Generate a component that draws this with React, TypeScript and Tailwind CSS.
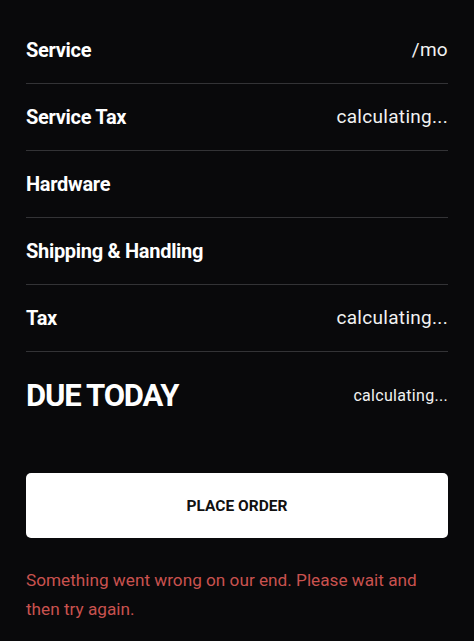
import * as React from "react"

const rows = [
  { label: "Service", value: "/mo" },
  { label: "Service Tax", value: "calculating..." },
  { label: "Hardware", value: "" },
  { label: "Shipping & Handling", value: "" },
  { label: "Tax", value: "calculating..." },
]

export default function App() {
  return (
    <div
      className="min-h-screen w-full bg-[#09090b] px-[26px] pt-[17px] text-white"
      style={{ fontFamily: "Roboto, 'Liberation Sans', sans-serif" }}
    >
      {rows.map((row) => (
        <div
          key={row.label}
          className="flex h-[67px] items-center justify-between border-b border-[#333336]"
        >
          <span className="text-[20px] font-bold tracking-[-0.3px]">{row.label}</span>
          <span className="text-[19px] font-normal tracking-[0.3px] text-[#f2f2f2]">{row.value}</span>
        </div>
      ))}

      {/* Due today */}
      <div className="flex h-[88px] items-center justify-between">
        <span className="text-[31px] font-bold tracking-[-1.2px]">DUE TODAY</span>
        <span className="text-[16px] font-normal tracking-[0.3px] text-[#f2f2f2]">calculating...</span>
      </div>

      <button className="mt-[33px] flex h-[65px] w-full items-center justify-center rounded-[5px] bg-white pt-[2px] text-[15.5px] font-bold text-[#111]">
        PLACE ORDER
      </button>

      <p className="mt-[28px] text-[17.2px] leading-[29px] text-[#c9524f]">
        Something went wrong on our end. Please wait and then try again.
      </p>
    </div>
  )
}
